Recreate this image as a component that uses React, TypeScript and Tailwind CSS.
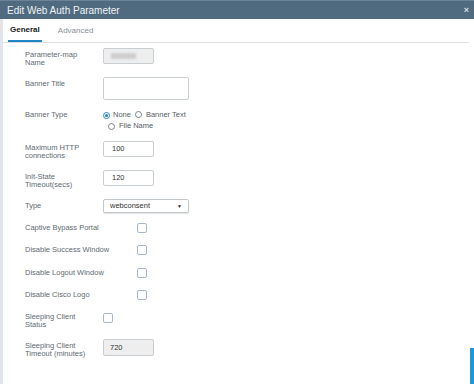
const font = { fontFamily: '"Liberation Sans", Arial, sans-serif' };

function Label({ lines }: { lines: string[] }) {
  return (
    <div className="w-[78px] shrink-0 whitespace-nowrap text-[7.5px] leading-[8px] text-[#616a72]">
      {lines.map((l) => (
        <div key={l}>{l}</div>
      ))}
    </div>
  );
}

function Checkbox() {
  return <div className="w-[10px] h-[10px] rounded-[2px] border border-[#a9b7cc] bg-white" />;
}

function Radio({ checked }: { checked?: boolean }) {
  return (
    <span
      className={
        'inline-flex items-center justify-center w-[7px] h-[7px] rounded-full border ' +
        (checked ? 'border-[#1f86c6]' : 'border-[#7a838c]')
      }
    >
      {checked && <span className="w-[3px] h-[3px] rounded-full bg-[#1f86c6]" />}
    </span>
  );
}

export default function App() {
  return (
    <div className="relative w-[474px] h-[384px] bg-white overflow-hidden" style={font}>
      {/* Title bar */}
      <div className="h-[19px] bg-[#506b80] border-t border-[#6a8396] flex items-center justify-between pl-[7px] pr-[5px]">
        <span className="text-[10px] text-[#eef2f5]">Edit Web Auth Parameter</span>
        <span className="text-[9px] leading-none text-[#d5dde3] font-bold">×</span>
      </div>

      <div className="flex h-[365px]">
        <div className="w-[3px] bg-[#e2e6ea]" />
        <div className="flex-1 flex flex-col">
          {/* Tabs */}
          <div className="h-[24px] flex items-end border-b border-[#dcdfe2] mr-[5px]">
            <div className="ml-[5px] px-[2px] h-[22px] flex items-center border-b-2 border-[#1f86c6] text-[8px] font-bold text-[#222]">
              General
            </div>
            <div className="ml-[16px] h-[22px] flex items-center text-[8px] text-[#8a9096]">Advanced</div>
          </div>

          {/* Form */}
          <div className="pl-[22px] pt-[5px] flex flex-col">
            <div className="h-[29px] flex">
              <div className="pt-[3px]">
                <Label lines={['Parameter-map', 'Name']} />
              </div>
              <div className="w-[51px] h-[16px] rounded-[2px] border border-[#c9ced3] bg-[#eeeeee] flex items-center pl-[7px]">
                <div className="w-[25px] h-[6px] bg-[#cfcfcf] blur-[1px]" />
              </div>
            </div>

            <div className="h-[34px] flex">
              <div className="pt-[3px]">
                <Label lines={['Banner Title']} />
              </div>
              <div className="w-[86px] h-[23px] rounded-[2px] border border-[#c9ced3] bg-white" />
            </div>

            <div className="h-[30px] flex">
              <Label lines={['Banner Type']} />
              <div className="flex flex-col text-[7.5px] leading-[8px] text-[#555d66]">
                <div className="flex items-center h-[8px]">
                  <Radio checked />
                  <span className="ml-[3px]">None</span>
                  <span className="ml-[4px]">
                    <Radio />
                  </span>
                  <span className="ml-[4px]">Banner Text</span>
                </div>
                <div className="flex items-center h-[8px] mt-[3px] ml-[5px]">
                  <Radio />
                  <span className="ml-[4px]">File Name</span>
                </div>
              </div>
            </div>

            <div className="h-[29px] flex">
              <div className="pt-[3px]">
                <Label lines={['Maximum HTTP', 'connections']} />
              </div>
              <div className="w-[51px] h-[16px] rounded-[2px] border border-[#c9ced3] bg-white flex items-center pl-[8px] text-[7.5px] text-[#333]">
                100
              </div>
            </div>

            <div className="h-[29px] flex">
              <div className="pt-[3px]">
                <Label lines={['Init-State', 'Timeout(secs)']} />
              </div>
              <div className="w-[51px] h-[16px] rounded-[2px] border border-[#c9ced3] bg-white flex items-center pl-[8px] text-[7.5px] text-[#333]">
                120
              </div>
            </div>

            <div className="h-[24px] flex">
              <div className="pt-[3px]">
                <Label lines={['Type']} />
              </div>
              <div className="w-[86px] h-[14px] rounded-[2px] border border-[#c3c8cd] bg-white shadow-[0_1px_1px_rgba(0,0,0,0.12)] flex items-center justify-between pl-[6px] pr-[6px] text-[7.5px] text-[#333]">
                <span>webconsent</span>
                <span className="text-[5px] leading-none text-[#222]">▼</span>
              </div>
            </div>

            {['Captive Bypass Portal', 'Disable Success Window', 'Disable Logout Window', 'Disable Cisco Logo'].map(
              (t, i) => (
                <div key={t} className={(i % 2 === 0 ? 'h-[22px]' : 'h-[23px]') + ' flex'}>
                  <div className="pt-[1px]">
                    <Label lines={[t]} />
                  </div>
                  <div className="ml-[34px]">
                    <Checkbox />
                  </div>
                </div>
              )
            )}

            <div className="h-[26px] flex">
              <Label lines={['Sleeping Client', 'Status']} />
              <Checkbox />
            </div>

            <div className="h-[26px] flex">
              <div className="pt-[3px]">
                <Label lines={['Sleeping Client', 'Timeout (minutes)']} />
              </div>
              <div className="w-[51px] h-[17px] rounded-[2px] border border-[#c9ced3] bg-[#eeeeee] flex items-center pl-[6px] text-[7.5px] text-[#333]">
                720
              </div>
            </div>
          </div>
        </div>
      </div>

      {/* button edge peeking at the lower right */}
      <div className="absolute right-0 bottom-0 w-[4px] h-[36px] bg-[#1a9ad6]" />
    </div>
  );
}
